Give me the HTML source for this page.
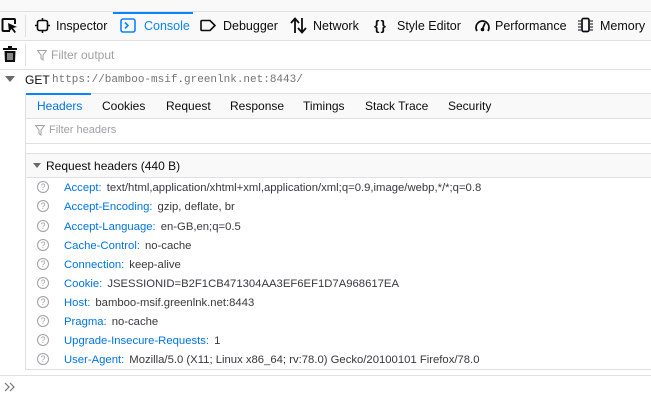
<!DOCTYPE html>
<html><head><meta charset="utf-8"><style>
*{margin:0;padding:0;box-sizing:border-box}
body{width:651px;height:419px;background:#fff;font-family:"Liberation Sans","DejaVu Sans",sans-serif;color:#0c0c0d;position:relative;overflow:hidden;font-size:12px}
.a{position:absolute;white-space:nowrap}
.t{font-size:12.5px;top:19px;color:#0c0c0d}
.ic{position:absolute}
.k{color:#0074e8}
.row{position:absolute;left:37px;height:19px;font-size:11.3px;line-height:19px;white-space:nowrap}
.row .q{display:inline-block;width:12px;height:12px;border:1px solid #a0a0a4;border-radius:50%;font-size:9px;line-height:10px;text-align:center;color:#a0a0a4;vertical-align:1px;margin-right:15px}
.row .v{color:#38383d;margin-left:5px}
.ht{position:absolute;top:99px;font-size:12px;color:#0c0c0d}
</style></head><body>
<div class="a" style="left:0;top:0;width:651px;height:12px;background:#f9f9fa;border-bottom:1px solid #e0e0e2"></div>
<div class="a" style="left:0;top:12px;width:651px;height:29px;background:#f9f9fa;border-bottom:1px solid #e0e0e2"></div>
<div class="a" style="left:113px;top:12px;width:80px;height:2px;background:#0a84ff"></div>
<div class="a" style="left:25px;top:15px;width:1px;height:22px;background:#e0e0e2"></div>
<svg class="ic" style="left:1px;top:17px" width="18" height="17" viewBox="0 0 18 17"><path d="M9 14H2.5Q1.5 14 1.5 13V3Q1.5 2 2.5 2H13Q14 2 14 3V7" fill="none" stroke="#0c0c0d" stroke-width="2"/><path d="M7 6L16 10L12 11L15 15L13.5 16L10.5 12L8 15Z" fill="#0c0c0d"/></svg>
<svg class="ic" style="left:35px;top:18px" width="15" height="15" viewBox="0 0 15 15"><rect x="2.5" y="2.5" width="10" height="10" rx="2" fill="none" stroke="#0c0c0d" stroke-width="1.6"/><path d="M7.5 0V3M7.5 12V15M0 7.5H3M12 7.5H15" stroke="#0c0c0d" stroke-width="1.6"/></svg>
<span class="a t" style="left:56px">Inspector</span>
<svg class="ic" style="left:120px;top:18px" width="16" height="15" viewBox="0 0 16 15"><rect x="1" y="1" width="14" height="13" rx="2" fill="none" stroke="#0a84ff" stroke-width="1.6"/><path d="M5 4.5L8 7.5L5 10.5" fill="none" stroke="#0a84ff" stroke-width="1.6"/></svg>
<span class="a t" style="left:144px;color:#0a84ff">Console</span>
<svg class="ic" style="left:200px;top:19px" width="17" height="13" viewBox="0 0 17 13"><path d="M2 1.5H10L15 6.5L10 11.5H2Q1 11.5 1 10.5V2.5Q1 1.5 2 1.5Z" fill="none" stroke="#0c0c0d" stroke-width="1.6"/></svg>
<span class="a t" style="left:223px">Debugger</span>
<svg class="ic" style="left:290px;top:17px" width="17" height="17" viewBox="0 0 17 17"><path d="M5 16V2M1 6L5 1.5L9 6M12 1V15M8 11L12 15.5L16 11" fill="none" stroke="#0c0c0d" stroke-width="1.8"/></svg>
<span class="a t" style="left:313px">Network</span>
<span class="a" style="left:374px;top:17px;font-size:14px;font-weight:bold;letter-spacing:1px">{}</span>
<span class="a t" style="left:397px">Style Editor</span>
<svg class="ic" style="left:474px;top:17px" width="17" height="16" viewBox="0 0 17 16"><path d="M3 14A6.5 6.5 0 1 1 14 14" fill="none" stroke="#0c0c0d" stroke-width="1.7"/><path d="M8.5 12L11 6" stroke="#0c0c0d" stroke-width="1.7"/><circle cx="8.5" cy="12.5" r="1.8" fill="#0c0c0d"/></svg>
<span class="a t" style="left:495px">Performance</span>
<svg class="ic" style="left:578px;top:17px" width="15" height="16" viewBox="0 0 15 16"><rect x="4" y="1.5" width="7" height="13" rx="1.5" fill="none" stroke="#0c0c0d" stroke-width="1.7"/><path d="M0 4H3M0 7H3M0 10H3M0 13H3M12 4H15M12 7H15M12 10H15M12 13H15" stroke="#0c0c0d" stroke-width="1"/></svg>
<span class="a t" style="left:600px">Memory</span>

<div class="a" style="left:0;top:41px;width:651px;height:29px;border-bottom:1px solid #e0e0e2"></div>
<svg class="ic" style="left:3px;top:46px" width="14" height="17" viewBox="0 0 14 17"><rect x="0" y="2" width="14" height="2" fill="#0c0c0d"/><rect x="5" y="0" width="4" height="2" fill="#0c0c0d"/><path d="M1.5 5H12.5L12 16H2Z" fill="#0c0c0d"/><path d="M5 7V14M7 7V14M9 7V14" stroke="#fff" stroke-width="1"/></svg>
<div class="a" style="left:25px;top:44px;width:1px;height:22px;background:#e0e0e2"></div>
<svg class="ic" style="left:37px;top:50px" width="10" height="11" viewBox="0 0 10 11"><path d="M0.5 0.5H9.5L6 5V10L4 8.5V5Z" fill="none" stroke="#a0a0a4" stroke-width="1"/></svg>
<span class="a" style="left:51px;top:48px;font-size:12px;color:#a0a0a4">Filter output</span>

<div class="a" style="left:5px;top:76px;width:0;height:0;border-left:5px solid transparent;border-right:5px solid transparent;border-top:6px solid #6a6a6d"></div>
<span class="a" style="left:25px;top:73px;font-size:12px;color:#0c0c0d">GET</span>
<span class="a" style="left:52px;top:74px;font-size:11px;color:#737373;font-family:'Liberation Mono',monospace">https://bamboo-msif.greenlnk.net:8443/</span>

<div class="a" style="left:25px;top:93px;width:626px;height:277px;border-left:1px solid #e0e0e2;border-bottom:1px solid #e0e0e2"></div>
<div class="a" style="left:26px;top:93px;width:625px;height:26px;background:#f9f9fa;border-top:1px solid #e0e0e2;border-bottom:1px solid #e0e0e2"></div>
<div class="a" style="left:26px;top:93px;width:65px;height:2px;background:#0a84ff"></div>
<span class="ht" style="left:37px;color:#0074e8">Headers</span>
<span class="ht" style="left:102px">Cookies</span>
<span class="ht" style="left:166px">Request</span>
<span class="ht" style="left:230px">Response</span>
<span class="ht" style="left:303px">Timings</span>
<span class="ht" style="left:365px">Stack Trace</span>
<span class="ht" style="left:448px">Security</span>
<svg class="ic" style="left:35px;top:125px" width="10" height="11" viewBox="0 0 10 11"><path d="M0.5 0.5H9.5L6 5V10L4 8.5V5Z" fill="none" stroke="#a0a0a4" stroke-width="1"/></svg>
<span class="a" style="left:49px;top:124px;font-size:11px;color:#a0a0a4">Filter headers</span>
<div class="a" style="left:26px;top:143px;width:625px;height:1px;background:#e0e0e2"></div>
<div class="a" style="left:26px;top:153px;width:625px;height:25px;background:#f9f9fa;border-top:1px solid #e0e0e2;border-bottom:1px solid #e0e0e2"></div>
<div class="a" style="left:33px;top:163px;width:0;height:0;border-left:4px solid transparent;border-right:4px solid transparent;border-top:5px solid #6a6a6d"></div>
<span class="a" style="left:46px;top:159px;font-size:12px">Request headers (440 B)</span>

<div class="row" style="top:179px"><span class="q">?</span><span class="k">Accept:</span><span class="v">text/html,application/xhtml+xml,application/xml;q=0.9,image/webp,*/*;q=0.8</span></div>
<div class="row" style="top:198px"><span class="q">?</span><span class="k">Accept-Encoding:</span><span class="v">gzip, deflate, br</span></div>
<div class="row" style="top:217.5px"><span class="q">?</span><span class="k">Accept-Language:</span><span class="v">en-GB,en;q=0.5</span></div>
<div class="row" style="top:236.5px"><span class="q">?</span><span class="k">Cache-Control:</span><span class="v">no-cache</span></div>
<div class="row" style="top:255.5px"><span class="q">?</span><span class="k">Connection:</span><span class="v">keep-alive</span></div>
<div class="row" style="top:274.5px"><span class="q">?</span><span class="k">Cookie:</span><span class="v">JSESSIONID=B2F1CB471304AA3EF6EF1D7A968617EA</span></div>
<div class="row" style="top:293.5px"><span class="q">?</span><span class="k">Host:</span><span class="v">bamboo-msif.greenlnk.net:8443</span></div>
<div class="row" style="top:313px"><span class="q">?</span><span class="k">Pragma:</span><span class="v">no-cache</span></div>
<div class="row" style="top:332px"><span class="q">?</span><span class="k">Upgrade-Insecure-Requests:</span><span class="v">1</span></div>
<div class="row" style="top:351px"><span class="q">?</span><span class="k">User-Agent:</span><span class="v">Mozilla/5.0 (X11; Linux x86_64; rv:78.0) Gecko/20100101 Firefox/78.0</span></div>

<div class="a" style="left:0;top:375px;width:651px;height:1px;background:#e0e0e2"></div>
<svg class="ic" style="left:4px;top:382px" width="12" height="10" viewBox="0 0 12 10"><path d="M1 1L5 5L1 9M6 1L10 5L6 9" fill="none" stroke="#737373" stroke-width="1.2"/></svg>
</body></html>
